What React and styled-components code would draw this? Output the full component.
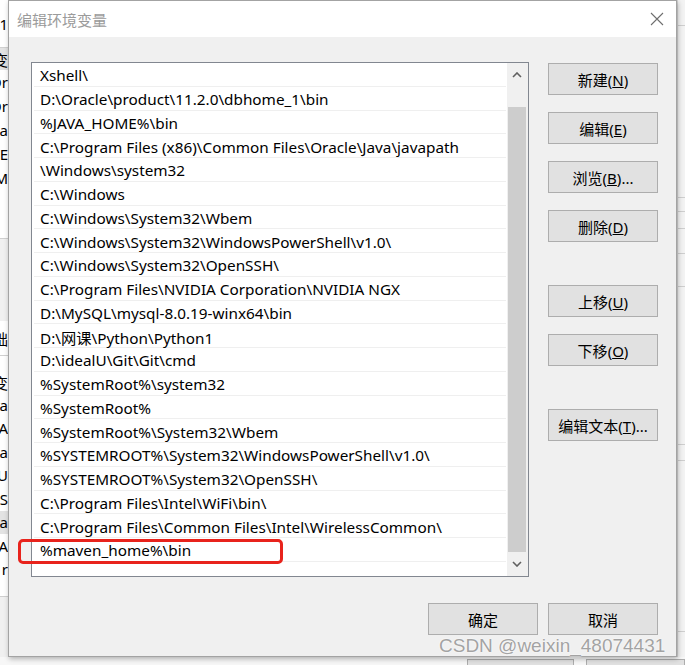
import styled, { createGlobalStyle } from 'styled-components';

const UI_FONT = `"Noto Sans", "Noto Sans CJK SC", sans-serif`;

const GlobalStyle = createGlobalStyle`
  html, body { margin: 0; padding: 0; background: #ffffff; }
  body { font-family: ${UI_FONT}; color: #000; }
`;

const PATHS = [
  'Xshell\\',
  'D:\\Oracle\\product\\11.2.0\\dbhome_1\\bin',
  '%JAVA_HOME%\\bin',
  'C:\\Program Files (x86)\\Common Files\\Oracle\\Java\\javapath',
  '\\Windows\\system32',
  'C:\\Windows',
  'C:\\Windows\\System32\\Wbem',
  'C:\\Windows\\System32\\WindowsPowerShell\\v1.0\\',
  'C:\\Windows\\System32\\OpenSSH\\',
  'C:\\Program Files\\NVIDIA Corporation\\NVIDIA NGX',
  'D:\\MySQL\\mysql-8.0.19-winx64\\bin',
  'D:\\网课\\Python\\Python1',
  'D:\\idealU\\Git\\Git\\cmd',
  '%SystemRoot%\\system32',
  '%SystemRoot%',
  '%SystemRoot%\\System32\\Wbem',
  '%SYSTEMROOT%\\System32\\WindowsPowerShell\\v1.0\\',
  '%SYSTEMROOT%\\System32\\OpenSSH\\',
  'C:\\Program Files\\Intel\\WiFi\\bin\\',
  'C:\\Program Files\\Common Files\\Intel\\WirelessCommon\\',
  '%maven_home%\\bin',
];

const SIDE_BUTTONS = [
  { label: '新建', key: 'N' },
  { label: '编辑', key: 'E' },
  { label: '浏览', key: 'B', more: true },
  { label: '删除', key: 'D' },
  { label: '上移', key: 'U', spaced: true },
  { label: '下移', key: 'O' },
  { label: '编辑文本', key: 'T', more: true, spaced: true },
];

// fragments of the window sitting behind the dialog
const BACK_TOP = ['Or', 'Or', 'a', 'E', 'M'];
const BACK_BOTTOM = ['变', 'ra', 'A', 'na', 'IU', 'oS', 'a', 'A', 'r'];

const Screen = styled.div`
  position: relative;
  width: 685px;
  height: 665px;
  overflow: hidden;
  display: grid;
  grid-template-columns: 8px 669px 8px;
  grid-template-rows: 657px 8px;
  background: #ffffff;
`;

const BackLeft = styled.div`
  display: flex;
  flex-direction: column;
  overflow: hidden;
  background: #f0f0f0;
  font-size: 15px;
`;

const BackPane = styled.div`
  display: flex;
  flex-direction: column;
  background: #ffffff;
  height: ${(p) => p.$h}px;
  border-bottom: 1px solid #cfcfcf;
  margin-top: ${(p) => p.$top || 0}px;
`;

const BackRow = styled.div`
  height: ${(p) => p.$h || 24}px;
  display: flex;
  justify-content: flex-end;
  align-items: ${(p) => (p.$end ? 'flex-end' : 'center')};
  white-space: nowrap;
  background: ${(p) => (p.$hl ? '#e3e3e3' : 'transparent')};
  border-bottom: ${(p) => (p.$line ? '1px solid #d0d0d0' : 'none')};
  flex: none;
`;

const BackRight = styled.div`
  display: flex;
  flex-direction: column;
  background: #f3f3f3;
  border-left: 1px solid #d6d6d6;
`;

const BackLine = styled.div`
  height: 1px;
  background: #cfcfcf;
  margin-top: ${(p) => p.$gap}px;
  flex: none;
`;

const BackBottom = styled.div`
  grid-column: 1 / 4;
  display: flex;
  gap: 12px;
  padding-left: 467px;
  padding-top: 2px;
  background: #f7f7f7;
`;

const BackButton = styled.div`
  width: ${(p) => p.$w}px;
  border: 1px solid #adadad;
  border-bottom: none;
  background: #e1e1e1;
`;

const Dialog = styled.div`
  display: flex;
  flex-direction: column;
  box-sizing: border-box;
  border: 1px solid #a3a3a3;
  background: #f0f0f0;
  box-shadow: 1px 2px 5px rgba(0, 0, 0, 0.28);
  z-index: 1;
`;

const TitleBar = styled.div`
  height: 36px;
  flex: none;
  display: flex;
  align-items: center;
  justify-content: space-between;
  padding: 0 12px 0 8px;
  background: #ffffff;
`;

const Title = styled.span`
  font-size: 15px;
  color: #9b9b9b;
  padding-top: 1px;
`;

const CloseIcon = styled.svg`
  width: 14px;
  height: 14px;
  display: block;
`;

const Body = styled.div`
  flex: 1;
  display: flex;
  flex-direction: column;
  padding: 25px 18px 21px 22px;
`;

const MainRow = styled.div`
  display: flex;
  gap: 19px;
`;

const ListBox = styled.div`
  width: 498px;
  height: 515px;
  box-sizing: border-box;
  border: 1px solid #828790;
  background: #ffffff;
  display: flex;
`;

const Items = styled.div`
  flex: 1;
  display: flex;
  flex-direction: column;
  padding: 0 1px 0 2px;
`;

const Item = styled.div`
  height: 23.75px;
  box-sizing: border-box;
  flex: none;
  display: flex;
  align-items: center;
  padding: 2px 0 0 6px;
  border-bottom: 1px solid #efefef;
  font-size: 15.3px;
  white-space: nowrap;
`;

const ScrollBar = styled.div`
  width: 21px;
  flex: none;
  display: flex;
  flex-direction: column;
  background: #f0f0f0;
`;

const ArrowButton = styled.div`
  height: 24px;
  flex: none;
  display: flex;
  align-items: center;
  justify-content: center;
  padding-right: 1px;
`;

const Thumb = styled.div`
  flex: 1;
  margin: 20px 2px 0 1px;
  background: #cdcdcd;
`;

const ButtonColumn = styled.div`
  width: 110px;
  display: flex;
  flex-direction: column;
  gap: 17px;
  padding-top: 1px;
`;

const WinButton = styled.div`
  width: 110px;
  height: 32px;
  box-sizing: border-box;
  border: 1px solid #adadad;
  background: #e1e1e1;
  display: flex;
  align-items: center;
  justify-content: center;
  font-size: 15px;
  color: #000;
  margin-top: ${(p) => (p.$spaced ? 26 : 0)}px;
  flex: none;
  white-space: nowrap;
`;

const Footer = styled.div`
  display: flex;
  justify-content: flex-end;
  gap: 10px;
  margin-top: 26px;
`;

const Highlight = styled.div`
  position: absolute;
  left: 18px;
  top: 539px;
  width: 265px;
  height: 25px;
  box-sizing: border-box;
  border: 3px solid #e8231c;
  border-radius: 5px;
  z-index: 2;
`;

const Watermark = styled.div`
  position: absolute;
  left: 439px;
  top: 636px;
  font-family: "Liberation Sans", Arial, sans-serif;
  font-size: 19px;
  line-height: 19px;
  color: #a3a3a3;
  text-shadow: 0 0 2px #fff, 0 0 1px #fff;
  white-space: nowrap;
  z-index: 2;
`;

function Chevron({ down }) {
  return (
    <svg width="10" height="6" viewBox="0 0 10 6">
      <path
        d={down ? 'M1 1 L5 5 L9 1' : 'M1 5 L5 1 L9 5'}
        fill="none"
        stroke="#606060"
        strokeWidth="1.6"
      />
    </svg>
  );
}

function ButtonLabel({ label, accel, more }) {
  return (
    <span>
      {label}(<u>{accel}</u>){more ? '...' : ''}
    </span>
  );
}

export default function App() {
  return (
    <>
      <GlobalStyle />
      <Screen>
        <BackLeft>
          <BackPane $h={238}>
            <BackRow $h={47} $line>31</BackRow>
            <BackRow $h={22} $hl>变</BackRow>
            {BACK_TOP.map((t, i) => (
              <BackRow key={i}>{t}</BackRow>
            ))}
          </BackPane>
          <BackPane $h={275} $top={82}>
            <BackRow $h={34} $line>础</BackRow>
            {BACK_BOTTOM.map((t, i) => (
              <BackRow key={i} $h={i === 0 ? 37 : 23.5} $end={i === 0} $hl={i === 6}>
                {t}
              </BackRow>
            ))}
          </BackPane>
        </BackLeft>

        <Dialog>
          <TitleBar>
            <Title>编辑环境变量</Title>
            <CloseIcon viewBox="0 0 14 14">
              <path d="M1 1 L13 13 M13 1 L1 13" stroke="#6e6e6e" strokeWidth="1.1" />
            </CloseIcon>
          </TitleBar>
          <Body>
            <MainRow>
              <ListBox>
                <Items>
                  {PATHS.map((p) => (
                    <Item key={p}>{p}</Item>
                  ))}
                </Items>
                <ScrollBar>
                  <ArrowButton>
                    <Chevron />
                  </ArrowButton>
                  <Thumb />
                  <ArrowButton>
                    <Chevron down />
                  </ArrowButton>
                </ScrollBar>
              </ListBox>
              <ButtonColumn>
                {SIDE_BUTTONS.map((b) => (
                  <WinButton key={b.key} $spaced={b.spaced}>
                    <ButtonLabel label={b.label} accel={b.key} more={b.more} />
                  </WinButton>
                ))}
              </ButtonColumn>
            </MainRow>
            <Footer>
              <WinButton>确定</WinButton>
              <WinButton>取消</WinButton>
            </Footer>
          </Body>
        </Dialog>

        <BackRight>
          <BackLine $gap={25} />
          <BackLine $gap={171} />
          <BackLine $gap={13} />
          <BackLine $gap={16} />
          <BackLine $gap={24} />
          <BackLine $gap={32} />
          <BackLine $gap={157} />
          <BackLine $gap={15} />
          <BackLine $gap={170} />
        </BackRight>

        <BackBottom>
          <BackButton $w={108} />
          <BackButton $w={100} />
        </BackBottom>

        <Highlight />
        <Watermark>CSDN @weixin_48074431</Watermark>
      </Screen>
    </>
  );
}
